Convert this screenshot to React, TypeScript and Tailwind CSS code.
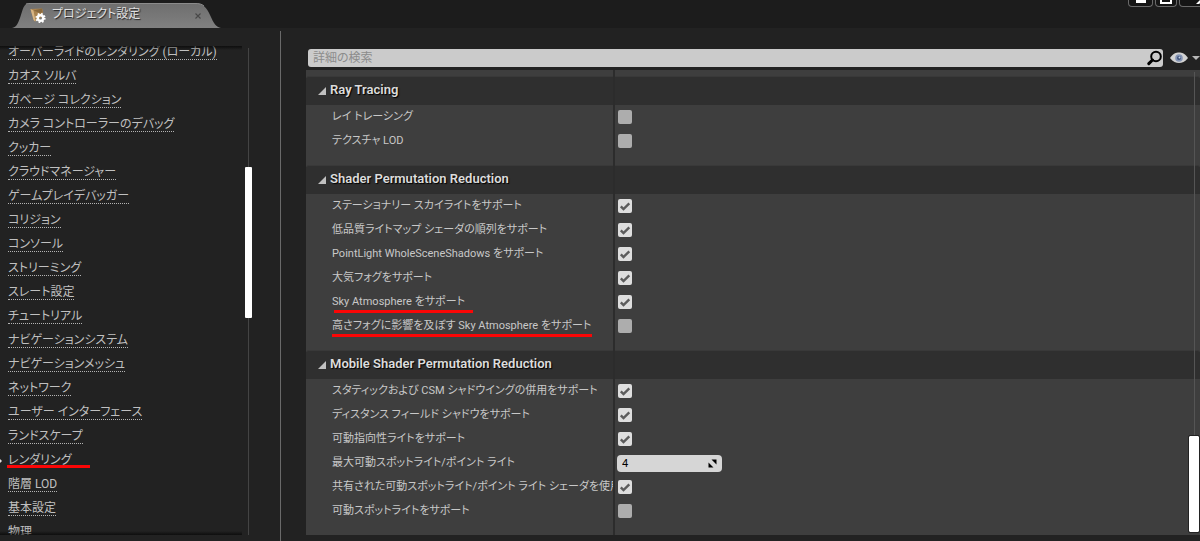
import React from 'react';
import clsx from 'clsx';

interface Category {
  label: string;
  active?: boolean;
}

interface Setting {
  label: string;
  checked?: boolean;
  value?: string;
  mark?: string;
}

interface Section {
  title: string;
  settings: Setting[];
}

const categories: Category[] = [
  { label: 'オーバーライドのレンダリング (ローカル)' },
  { label: 'カオス ソルバ' },
  { label: 'ガベージ コレクション' },
  { label: 'カメラ コントローラーのデバッグ' },
  { label: 'クッカー' },
  { label: 'クラウドマネージャー' },
  { label: 'ゲームプレイデバッガー' },
  { label: 'コリジョン' },
  { label: 'コンソール' },
  { label: 'ストリーミング' },
  { label: 'スレート設定' },
  { label: 'チュートリアル' },
  { label: 'ナビゲーションシステム' },
  { label: 'ナビゲーションメッシュ' },
  { label: 'ネットワーク' },
  { label: 'ユーザー インターフェース' },
  { label: 'ランドスケープ' },
  { label: 'レンダリング', active: true },
  { label: '階層 LOD' },
  { label: '基本設定' },
  { label: '物理' },
];

const sections: Section[] = [
  {
    title: 'Ray Tracing',
    settings: [{ label: 'レイ トレーシング' }, { label: 'テクスチャ LOD' }],
  },
  {
    title: 'Shader Permutation Reduction',
    settings: [
      { label: 'ステーショナリー スカイライトをサポート', checked: true },
      { label: '低品質ライトマップ シェーダの順列をサポート', checked: true },
      { label: 'PointLight WholeSceneShadows をサポート', checked: true },
      { label: '大気フォグをサポート', checked: true },
      { label: 'Sky Atmosphere をサポート', checked: true, mark: 'left-0.5 -right-2' },
      { label: '高さフォグに影響を及ぼす Sky Atmosphere をサポート', mark: 'left-0 -right-px' },
    ],
  },
  {
    title: 'Mobile Shader Permutation Reduction',
    settings: [
      { label: 'スタティックおよび CSM シャドウイングの併用をサポート', checked: true },
      { label: 'ディスタンス フィールド シャドウをサポート', checked: true },
      { label: '可動指向性ライトをサポート', checked: true },
      { label: '最大可動スポットライト/ポイント ライト', value: '4' },
      { label: '共有された可動スポットライト/ポイント ライト シェーダを使用', checked: true },
      { label: '可動スポットライトをサポート' },
    ],
  },
];

function ProjectIcon() {
  return (
    <svg width="16" height="16" viewBox="0 0 16 16" className="shrink-0">
      <path d="M0.5 1 12 0.5 13 3 12 9 4.5 13.5Z" fill="#a9834f" />
      <path d="M0.5 1 3.5 2.5 5.5 13.5 3.5 12Z" fill="#d9b685" />
      <path d="M3.5 2.5 12 0.5 12.5 4 10 5Z" fill="#8a6a3e" />
      <circle cx="10.5" cy="10" r="2.7" fill="none" stroke="#fff" strokeWidth="2.4" />
      <circle cx="10.5" cy="10" r="4.3" fill="none" stroke="#fff" strokeWidth="1.6" strokeDasharray="1.7 1.68" />
    </svg>
  );
}

function TitleBar() {
  return (
    <header className="relative flex h-7 shrink-0 items-end bg-[#1c1c1c] pl-3">
      <div className="relative flex h-[25px] w-[209px] items-center pr-4 pl-[18px]">
        <svg viewBox="0 0 209 25" preserveAspectRatio="none" className="absolute inset-0 h-full w-full">
          <defs>
            <linearGradient id="tab" x1="0" y1="0" x2="0" y2="1">
              <stop offset="0" stopColor="#6e6e6e" />
              <stop offset="1" stopColor="#808080" />
            </linearGradient>
          </defs>
          <path d="M0 25C5 24 6 20 8 15 11 7 11 0 18 0H183C191 0 195 5 198 12 202 21 204 24 209 25Z" fill="url(#tab)" />
          <path d="M14 1C15 0.5 16 0.5 18 0.5H183C187 0.5 190 1 192 3" fill="none" stroke="#8b8b8b" />
        </svg>
        <div className="relative flex flex-1 items-center gap-1.5">
          <ProjectIcon />
          <span className="pb-1 text-xs leading-4 text-[#e0e0e0] [text-shadow:1px_1px_1px_#222]">プロジェクト設定</span>
        </div>
        <button aria-label="タブを閉じる" className="relative">
          <svg width="6" height="6" viewBox="0 0 6 6" className="mr-1">
            <path d="M0.5 0.5 5.5 5.5M5.5 0.5 0.5 5.5" stroke="#484848" strokeWidth="1.1" />
          </svg>
        </button>
      </div>
      <div className="absolute top-0 right-0 flex h-[7px] w-[72px] gap-0.5 overflow-hidden">
        <button aria-label="最小化" className="flex w-[25px] shrink-0 justify-center rounded-b-sm border border-t-0 border-[#6a6a6a] bg-[#151515]">
          <span className="h-[3px] w-2.5 bg-white" />
        </button>
        <button aria-label="最大化" className="flex w-[22px] shrink-0 justify-center rounded-b-sm border border-t-0 border-[#6a6a6a] bg-[#151515]">
          <span className="h-1 w-3 border-2 border-t-0 border-white" />
        </button>
        <button aria-label="閉じる" className="flex w-11 shrink-0 justify-center rounded-b-sm border border-t-0 border-[#6a6a6a] bg-[#151515]">
          <svg width="14" height="4" viewBox="0 0 14 4">
            <path d="M2 4 6 0H8L12 4H9L7 2.500 5 4Z" fill="#fff" />
          </svg>
        </button>
      </div>
    </header>
  );
}

function Sidebar() {
  return (
    <nav className="flex w-[280px] shrink-0 pt-[18px] pb-1.5">
      <div className="relative flex-1 overflow-hidden">
        <ul className="-mt-1.5">
          {categories.map((category) => (
            <li key={category.label} className="flex h-6 items-center pt-0.5 pl-2 whitespace-nowrap">
              {category.active && (
                <svg width="2" height="4" viewBox="0 0 2 4" className="absolute left-0">
                  <path d="M0 0 2 2 0 4Z" fill="#ddd" />
                </svg>
              )}
              <a
                href="#"
                className={clsx(
                  'relative border-b border-dotted text-xs leading-[13px] text-[#c0c0c0]',
                  category.active ? 'border-transparent' : 'border-[#b4b4b4]',
                )}
              >
                {category.label}
                {category.active && <span className="absolute -right-[18px] -bottom-px -left-px h-[3px] bg-[#fb0606]" />}
              </a>
            </li>
          ))}
        </ul>
        <div className="absolute inset-x-0 top-0 h-1 bg-linear-to-b from-black/60 to-transparent" />
        <div className="absolute inset-x-0 bottom-0 h-1 bg-linear-to-t from-black/60 to-transparent" />
      </div>
      <div className="relative mt-0.5 mr-7 ml-[3px] flex w-[7px] justify-center">
        <div className="w-px bg-[#444]" />
        <div className="absolute top-[119px] h-[151px] w-[7px] rounded-[1px] bg-white" />
      </div>
    </nav>
  );
}

function SearchBar() {
  return (
    <div className="flex h-[18px] items-center pl-0.5">
      <div className="relative flex flex-1">
        <input
          type="search"
          aria-label="詳細の検索"
          placeholder="詳細の検索"
          className="h-[18px] w-full rounded-[3px] bg-[#cbcbcb] pr-6 pl-[5px] text-xs text-black outline-none placeholder:text-[#8c8c8c]"
        />
        <svg width="16" height="16" viewBox="0 0 16 16" className="absolute top-px right-0">
          <circle cx="9" cy="6.500" r="4.800" fill="none" stroke="#000" strokeWidth="2" />
          <path d="M5.500 10 1.800 13.600" stroke="#000" strokeWidth="3" strokeLinecap="round" />
        </svg>
      </div>
      <button aria-label="表示オプション" className="flex items-center gap-1 pl-[7px]">
        <svg width="18" height="12" viewBox="0 0 18 12">
          <path d="M0 6C3 1.500 6 0.500 9 0.500S15 1.500 18 6C15 10 12 11 9 11S3 10 0 6Z" fill="#d2d2d2" />
          <circle cx="9" cy="6" r="3.800" fill="#8494b4" />
          <circle cx="9" cy="6" r="2" fill="#3f527a" />
          <circle cx="9.500" cy="5.500" r="1" fill="#c5d2e8" />
        </svg>
        <svg width="8" height="4" viewBox="0 0 8 4">
          <path d="M0 0H8L4 4Z" fill="#b8b8b8" />
        </svg>
      </button>
    </div>
  );
}

function SettingRow({ id, setting }: { id: string; setting: Setting }) {
  return (
    <div className="grid h-6 grid-cols-[308px_1fr] items-center">
      <div className="overflow-hidden pb-1 pl-[26px] whitespace-nowrap">
        <label htmlFor={id} className="relative inline-block text-[11px] leading-5 text-[#c8c8c8]">
          {setting.label}
          {setting.mark && <span className={clsx('absolute -bottom-px h-[3px] bg-[#fb0606]', setting.mark)} />}
        </label>
      </div>
      {setting.value ? (
        <div className="relative ml-[3px] w-[105px]">
          <input
            id={id}
            type="text"
            defaultValue={setting.value}
            className="block h-[17px] w-full rounded-[4px] bg-[#d6d6d6] px-[5px] text-[11px] text-black outline-none"
          />
          <svg width="9" height="9" viewBox="0 0 9 9" className="absolute top-1 right-[5px]">
            <path d="M3.500 0.500H8.500V5.500ZM0.500 3.500V8.500H5.500Z" fill="#000" />
          </svg>
        </div>
      ) : (
        <div className="relative ml-1 h-3.5 w-3.5">
          <input
            id={id}
            type="checkbox"
            defaultChecked={setting.checked}
            className="peer block h-3.5 w-3.5 appearance-none rounded-[2px] bg-[#adadad] checked:bg-[#dedede]"
          />
          <svg width="14" height="14" viewBox="0 0 14 14" className="pointer-events-none absolute inset-0 hidden peer-checked:block">
            <path d="M2.800 7.300 5.500 10 11.300 4.300" fill="none" stroke="#5c5c5c" strokeWidth="2.400" />
          </svg>
        </div>
      )}
    </div>
  );
}

function Details() {
  return (
    <div className="relative mt-[3px] flex-1 overflow-hidden bg-[#3e3e3e]">
      <div className="h-1.5" />
      {sections.map((section, i) => (
        <section key={section.title}>
          <h2 className="flex h-[29px] items-center rounded-t-[3px] border-t border-[#393939] bg-[#2f2f2f] pl-3">
            <button className="flex items-center gap-1 pb-0.5 text-[13px] leading-5 font-semibold text-[#dcdcdc] [text-shadow:1px_1px_1px_#000]">
              <svg width="8" height="8" viewBox="0 0 8 8" className="mt-0.5">
                <path d="M8 0V8H0Z" fill="#c0c0c0" />
              </svg>
              {section.title}
            </button>
          </h2>
          <div className="pb-3">
            {section.settings.map((setting, j) => (
              <SettingRow key={setting.label} id={`setting-${i}-${j}`} setting={setting} />
            ))}
          </div>
        </section>
      ))}
      <div className="pointer-events-none absolute inset-y-0 left-[307px] w-0.5 bg-[#2c2c2c]" />
      <div className="absolute inset-y-0.5 right-px flex w-2.5 justify-center">
        <div className="w-px bg-[#555]" />
        <div className="absolute bottom-px h-24 w-2.5 rounded-[1px] bg-white outline outline-[#222]" />
      </div>
    </div>
  );
}

export default function App() {
  return (
    <div className="flex h-screen flex-col overflow-hidden bg-[#222] font-[Roboto,'Noto_Sans_CJK_JP',sans-serif] [font-feature-settings:'palt']">
      <TitleBar />
      <div className="flex min-h-0 flex-1">
        <Sidebar />
        <div className="mt-[3px] w-px bg-[#6a6a6a]" />
        <main className="flex min-w-0 flex-1 flex-col pt-[21px] pb-1.5 pl-[25px]">
          <SearchBar />
          <Details />
        </main>
      </div>
    </div>
  );
}
